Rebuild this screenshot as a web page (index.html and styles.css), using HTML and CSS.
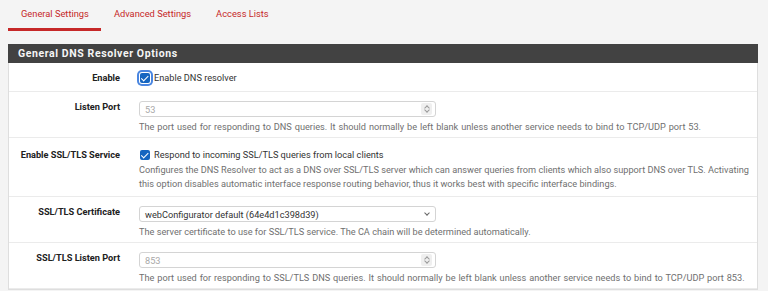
FILE: index.html
```html
<html>
<head>
  <link rel="stylesheet" href="styles.css">
</head>
<body>
  <div class="tabs">
    <a class="tab active">General Settings</a>
    <a class="tab">Advanced Settings</a>
    <a class="tab">Access Lists</a>
  </div>
  <div class="panel">
    <div class="panel-heading">General DNS Resolver Options</div>
    <div class="row row-first">
      <div class="row-label label-check">Enable</div>
      <div class="row-body">
        <label class="check check-focus"><span class="box"></span>Enable DNS resolver</label>
      </div>
    </div>
    <div class="row">
      <div class="row-label">Listen Port</div>
      <div class="row-body">
        <div class="field"><span class="placeholder">53</span><span class="spin"></span></div>
        <div class="help help-wide">The port used for responding to DNS queries. It should normally be left blank unless another service needs to bind to TCP/UDP port 53.</div>
      </div>
    </div>
    <div class="row row-tall">
      <div class="row-label label-check">Enable SSL/TLS Service</div>
      <div class="row-body">
        <label class="check"><span class="box"></span>Respond to incoming SSL/TLS queries from local clients</label>
        <div class="help">Configures the DNS Resolver to act as a DNS over SSL/TLS server which can answer queries from clients which also support DNS over TLS. Activating this option disables automatic interface response routing behavior, thus it works best with specific interface bindings.</div>
      </div>
    </div>
    <div class="row">
      <div class="row-label">SSL/TLS Certificate</div>
      <div class="row-body">
        <div class="field select">webConfigurator default (64e4d1c398d39)<span class="caret"></span></div>
        <div class="help">The server certificate to use for SSL/TLS service. The CA chain will be determined automatically.</div>
      </div>
    </div>
    <div class="row">
      <div class="row-label">SSL/TLS Listen Port</div>
      <div class="row-body">
        <div class="field"><span class="placeholder">853</span><span class="spin"></span></div>
        <div class="help help-wide">The port used for responding to SSL/TLS DNS queries. It should normally be left blank unless another service needs to bind to TCP/UDP port 853.</div>
      </div>
    </div>
  </div>
</body>
</html>
```

FILE: styles.css
```css
* {
  box-sizing: border-box;
  margin: 0;
  padding: 0;
}

body {
  background-color: #f4f4f4;
  font-family: Roboto, "Liberation Sans", sans-serif;
  font-size: 9.2px;
  color: #212121;
  padding: 0 8px;
}

.tabs {
  display: flex;
  height: 31px;
  margin-bottom: 13px;
}

.tab {
  display: block;
  color: #c62828;
  font-size: 9.3px;
  line-height: 28px;
  padding: 0 12px 0 13px;
  height: 31px;
}

.tab.active {
  border-bottom: 3px solid #c62828;
}

.panel {
  background-color: #fff;
  border: 1px solid #dedede;
  border-top: none;
  width: 750px;
}

.panel-heading {
  background-color: #424242;
  color: #f5f5f5;
  font-size: 10.5px;
  font-weight: bold;
  letter-spacing: 0.6px;
  height: 19px;
  line-height: 19px;
  padding-left: 10px;
  margin: 0 -1px;
}

.row {
  display: grid;
  grid-template-columns: 111px 1fr;
  column-gap: 19px;
  padding: 9px 0 3px;
  border-bottom: 1px solid #ebebeb;
}

.row-first {
  height: 29px;
  padding-top: 7px;
}

.row-tall {
  padding-bottom: 5px;
}

.row-label {
  text-align: right;
  font-weight: bold;
  line-height: 12px;
}

.label-check {
  line-height: 16px;
}

.row-body {
  padding-right: 2px;
}

.check {
  display: flex;
  align-items: center;
  height: 16px;
  line-height: 16px;
  color: #333;
}

.box {
  display: inline-block;
  width: 10px;
  height: 10px;
  border-radius: 2px;
  background-color: #1565c0;
  margin: 0 4px 0 1px;
  position: relative;
}

.box::after {
  content: "";
  position: absolute;
  left: 3.3px;
  top: 1px;
  width: 2.5px;
  height: 5.5px;
  border: solid #fff;
  border-width: 0 1.5px 1.5px 0;
  transform: rotate(45deg);
}

.check-focus .box {
  box-shadow: 0 0 0 1px #fff, 0 0 0 3px #4a86e0;
}

.field {
  width: 297px;
  height: 16px;
  border: 1px solid #d4d4d4;
  border-radius: 3px;
  display: flex;
  align-items: center;
  justify-content: space-between;
  padding: 0 3px 0 5px;
  color: #333;
}

.select {
  padding-right: 6px;
}

.placeholder {
  color: #a8a8a8;
}

.spin {
  width: 11px;
  height: 12px;
  background-color: #efefef;
  border-radius: 2px;
  position: relative;
}

.spin::before,
.spin::after {
  content: "";
  position: absolute;
  left: 4px;
  width: 3px;
  height: 3px;
  border: solid #999;
  border-width: 1px 0 0 1px;
}

.spin::before {
  top: 3px;
  transform: rotate(45deg);
}

.spin::after {
  top: 5px;
  transform: rotate(225deg);
}

.caret {
  width: 4px;
  height: 4px;
  border: solid #666;
  border-width: 0 1px 1px 0;
  transform: rotate(45deg);
  margin-top: -3px;
}

.help {
  color: #707070;
  line-height: 14px;
  margin-top: 3px;
}

.help-wide {
  word-spacing: 0.6px;
}

.check + .help {
  margin-top: 0;
}
```
